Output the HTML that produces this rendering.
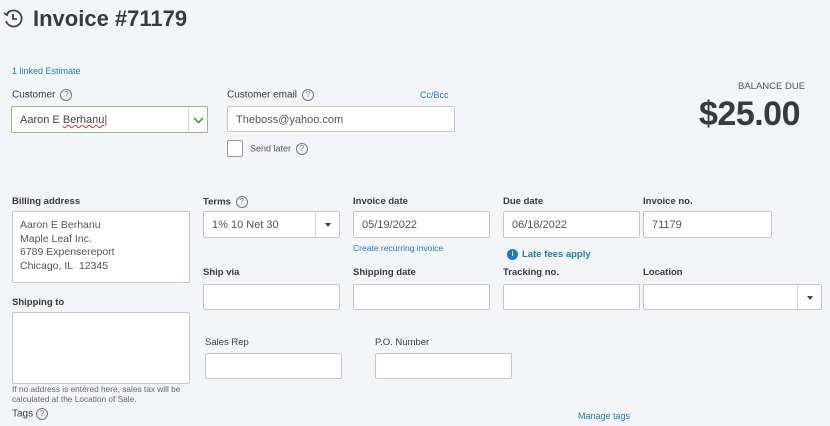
<!DOCTYPE html>
<html><head><meta charset="utf-8"><style>
*{margin:0;padding:0;box-sizing:border-box}
body{width:830px;height:426px;background:#f4f5f8;font-family:"Liberation Sans",sans-serif;color:#393a3d;position:relative;overflow:hidden}
.a{position:absolute;white-space:nowrap}
.lbl{font-size:10px;color:#393a3d}
.b{font-weight:bold;font-size:9.5px}
.box{position:absolute;background:#fff;border:1px solid #c4c5c9;border-radius:2px}
.t{font-size:11px;color:#555;position:absolute;left:8px;top:7px}
.blue{color:#1a7bc1}
.q{display:inline-block;width:12px;height:12px;border:1px solid #777;border-radius:50%;font-size:8px;text-align:center;line-height:10px;color:#777;vertical-align:middle;margin-left:5px}
.dd{position:absolute;right:0;top:0;bottom:0;width:24px;border-left:1px solid #d4d5d9}
.dd:after{content:"";position:absolute;left:9px;top:11px;border:3.5px solid transparent;border-top:4px solid #444}
</style></head><body>
<svg class="a" style="left:3px;top:8px" width="21" height="21" viewBox="0 0 21 21" fill="none" stroke="#444" stroke-width="1.8"><path d="M4 6 A8 8 0 1 1 3 13"/><path d="M1 5 L4 7 L6 3"/><path d="M10 6 V11 H14"/></svg>
<div class="a" style="left:33px;top:6px;font-size:22px;font-weight:bold;color:#393a3d">Invoice #71179</div>
<div class="a blue" style="left:12px;top:66px;font-size:9px">1 linked Estimate</div>
<div class="a lbl" style="left:12px;top:89px">Customer<span class="q">?</span></div>
<div class="box" style="left:11px;top:106px;width:197px;height:27px;border:1.5px solid #86c47e"><div class="t" style="color:#444">Aaron E <span style="text-decoration:underline wavy #d33;text-decoration-thickness:1px">Berhanu</span>|</div><div style="position:absolute;left:176px;top:0;bottom:0;border-left:1px solid #d4d5d9;width:19px"></div><svg style="position:absolute;left:181px;top:10px" width="11" height="7"><path d="M1 1 L5.5 5.5 L10 1" stroke="#2ca01c" stroke-width="1.5" fill="none"/></svg></div>
<div class="a lbl" style="left:227px;top:89px">Customer email<span class="q">?</span></div>
<div class="a blue" style="left:420px;top:90px;font-size:9px">Cc/Bcc</div>
<div class="box" style="left:227px;top:106px;width:228px;height:26px"><div class="t">Theboss@yahoo.com</div></div>
<div class="box" style="left:227px;top:140px;width:16px;height:17px;border-color:#999"></div>
<div class="a" style="left:250px;top:143px;font-size:9px;color:#555">Send later<span class="q">?</span></div>
<div class="a" style="left:738px;top:81px;font-size:9.5px;color:#555">BALANCE DUE</div>
<div class="a" style="left:699px;top:95px;font-size:34px;font-weight:bold;color:#393a3d;letter-spacing:-0.5px">$25.00</div>

<div class="a b" style="left:12px;top:196px">Billing address</div>
<div class="box" style="left:12px;top:211px;width:178px;height:72px"><div style="position:absolute;left:7px;top:7px;font-size:10.5px;color:#555;line-height:13.5px">Aaron E Berhanu<br>Maple Leaf Inc.<br>6789 Expensereport<br>Chicago, IL&nbsp; 12345</div></div>
<div class="a b" style="left:12px;top:297px">Shipping to</div>
<div class="box" style="left:12px;top:312px;width:178px;height:72px"></div>
<div class="a" style="left:12px;top:385px;font-size:8.3px;color:#666;line-height:9.5px">If no address is entered here, sales tax will be<br>calculated at the Location of Sale.</div>
<div class="a" style="left:12px;top:408px;font-size:10px">Tags<span class="q" style="margin-left:3px">?</span></div>

<div class="a b" style="left:203px;top:196px">Terms<span class="q" style="font-weight:normal">?</span></div>
<div class="box" style="left:203px;top:211px;width:137px;height:27px"><div class="t">1% 10 Net 30</div><div class="dd"></div></div>
<div class="a b" style="left:203px;top:267px">Ship via</div>
<div class="box" style="left:203px;top:284px;width:137px;height:26px"></div>
<div class="a lbl" style="left:205px;top:337px;font-size:9.5px">Sales Rep</div>
<div class="box" style="left:205px;top:353px;width:137px;height:26px"></div>

<div class="a b" style="left:353px;top:196px">Invoice date</div>
<div class="box" style="left:353px;top:211px;width:137px;height:27px"><div class="t">05/19/2022</div></div>
<div class="a blue" style="left:353px;top:243px;font-size:8.5px">Create recurring invoice</div>
<div class="a b" style="left:353px;top:267px">Shipping date</div>
<div class="box" style="left:353px;top:284px;width:137px;height:26px"></div>
<div class="a lbl" style="left:375px;top:337px;font-size:9.5px">P.O. Number</div>
<div class="box" style="left:375px;top:353px;width:137px;height:26px"></div>

<div class="a b" style="left:503px;top:196px">Due date</div>
<div class="box" style="left:503px;top:211px;width:137px;height:27px"><div class="t">06/18/2022</div></div>
<div class="a" style="left:507px;top:249px;width:11px;height:11px;border-radius:50%;background:#1a7bc1;color:#fff;font-size:7px;text-align:center;line-height:11px;font-weight:bold">i</div>
<div class="a blue" style="left:522px;top:249px;font-size:9.5px;font-weight:bold">Late fees apply</div>
<div class="a b" style="left:503px;top:267px">Tracking no.</div>
<div class="box" style="left:503px;top:284px;width:137px;height:26px"></div>

<div class="a b" style="left:643px;top:196px">Invoice no.</div>
<div class="box" style="left:643px;top:211px;width:129px;height:27px"><div class="t">71179</div></div>
<div class="a b" style="left:643px;top:267px">Location</div>
<div class="box" style="left:643px;top:284px;width:179px;height:26px"><div class="dd"></div></div>
<div class="a blue" style="left:578px;top:411px;font-size:9px">Manage tags</div>
</body></html>
